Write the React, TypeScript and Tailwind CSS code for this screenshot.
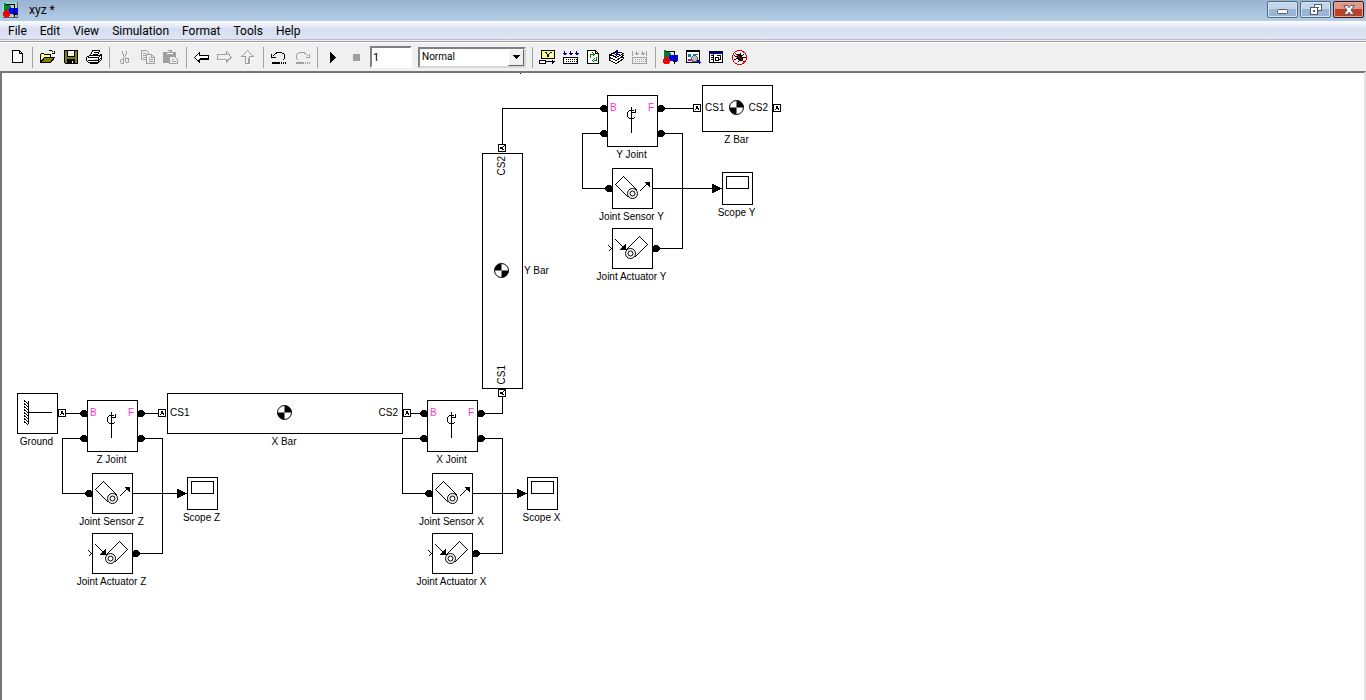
import type { ReactNode } from "react";

const menus = ["File", "Edit", "View", "Simulation", "Format", "Tools", "Help"];

/* ---------- toolbar ---------- */

function ToolButton({ label, disabled, children }: { label: string; disabled?: boolean; children: ReactNode }) {
  return (
    <button aria-label={label} disabled={disabled} className="flex h-[22px] w-[23px] shrink-0 items-center justify-center">
      <svg width="17" height="17" viewBox="0 0 17 17" shapeRendering="crispEdges" fill="none" stroke={disabled ? "#a0a0a0" : "#000"}>
        <g transform="translate(.5 .5)">{children}</g>
      </svg>
    </button>
  );
}

function Separator() {
  return (
    <div className="flex h-[21px] w-2 shrink-0 justify-center">
      <div className="h-full w-px bg-[#a0a0a0]" />
    </div>
  );
}

function ModelGlyph() {
  return (
    <>
      <path d="M2 1L8 4V10H2z" fill="#00802b" stroke="#00802b" />
      <path d="M7 6H15V11H7z" fill="#0000ff" stroke="#0000ff" />
      <path d="M3 2H12V14M10 12H14" stroke="#000" />
      <circle cx="4" cy="11" r="3" fill="#ff0000" stroke="#ff0000" />
      <path d="M4 9V11H6" stroke="#800000" />
    </>
  );
}

function Toolbar() {
  return (
    <div className="flex h-7 items-center overflow-hidden bg-[#f0f0f0] pl-[5px]">
      <ToolButton label="New model">
        <path d="M4 1H11L14 4V13H4zM11 1V4H14" fill="#fff" />
      </ToolButton>
      <Separator />
      <ToolButton label="Open model">
        <path d="M1 13V5L2 4H4L5 5H11V8" fill="#ffff80" />
        <path d="M1 13L5 8H15L11 13z" fill="#808000" />
        <path d="M9 2L10 1H12L14 3M15 1V4H12" />
      </ToolButton>
      <ToolButton label="Save">
        <path d="M2 1H15V14H3L2 13z" fill="#808000" />
        <path d="M5 1H12V7H5z" fill="#f0f0f0" />
        <path d="M5 10H12V14H5z" fill="#000" />
        <path d="M10 11V13" stroke="#fff" />
      </ToolButton>
      <ToolButton label="Print">
        <path d="M5 6L7 1H14L12 6z" fill="#fff" />
        <path d="M8 3H12M7 5H11" />
        <path d="M4 6H13L16 5V10L13 13H3L1 11V8z" fill="#fff" />
        <path d="M2 8H13L15 6M2 11H13L15 9M13 8V13M4 14H12" />
        <path d="M9 10H11" stroke="#d0d000" />
      </ToolButton>
      <Separator />
      <ToolButton label="Cut" disabled>
        <path d="M6 1V4L10 10M10 1V4L6 10" />
        <path d="M5 10H7V14H5L4 13V11zM10 9H12V13H10L9 12V10z" />
        <path d="M8 7V8M11 14H13" stroke="#fff" />
      </ToolButton>
      <ToolButton label="Copy" disabled>
        <path d="M2 1H7L9 3V10H2zM3 4H6M3 6H7M3 8H7" />
        <path d="M7 5H12L15 8V14H7z" fill="#f0f0f0" />
        <path d="M12 5V8H15M9 8H10M9 10H13M9 12H13" />
      </ToolButton>
      <ToolButton label="Paste" disabled>
        <path d="M1 3H13V13H1zM5 1H9V3" fill="#a0a0a0" />
        <path d="M4 4H10" stroke="#fff" />
        <path d="M7 7H12L15 10V14H7z" fill="#f0f0f0" />
        <path d="M9 10H11M9 12H13" />
      </ToolButton>
      <Separator />
      <ToolButton label="Go back">
        <path d="M1 8L6 3V6H15V10H6V13z" fill="#fff" />
        <path d="M6 9H15M5 12V10" />
      </ToolButton>
      <ToolButton label="Go forward" disabled>
        <path d="M2 11H9V14L15 9" stroke="#fff" />
        <path d="M15 8L10 2V5H1V10H10V13z" />
        <path d="M14 8L10 12" />
      </ToolButton>
      <ToolButton label="Go up to parent" disabled>
        <path d="M7 15H11V9H15" stroke="#fff" />
        <path d="M8 1L2 7H6V14H10V7H14z" />
        <path d="M9 8V13" />
      </ToolButton>
      <Separator />
      <ToolButton label="Undo">
        <path d="M1 4V8H5M2 7L5 4L7 3H11L14 5V9L12 11" />
        <path d="M1 13H9" strokeWidth="2" />
        <path d="M10 13H16" strokeWidth="2" strokeDasharray="1 1" />
      </ToolButton>
      <ToolButton label="Redo" disabled>
        <path d="M16 4V8H12M15 7L12 4L10 3H6L3 5V9L5 11" />
        <path d="M2 13H10" strokeWidth="2" />
        <path d="M11 13H17" strokeWidth="2" strokeDasharray="1 1" />
      </ToolButton>
      <Separator />
      <ToolButton label="Start simulation">
        <path d="M6 3L11 8L6 13z" fill="#000" />
      </ToolButton>
      <ToolButton label="Stop" disabled>
        <path d="M6 5H12V11H6z" fill="#a0a0a0" />
      </ToolButton>
      <input
        aria-label="Simulation stop time"
        defaultValue="1"
        className="ml-[3px] h-[22px] w-[42px] shrink-0 border-2 border-t-[#808080] border-r-white border-b-white border-l-[#808080] bg-white pl-px font-[Roboto,sans-serif] text-[11px] outline-none"
      />
      <div className="relative ml-1.5 h-[21px] w-[108px] shrink-0 border-2 border-t-[#808080] border-r-[#d8d8d8] border-b-[#d8d8d8] border-l-[#808080] bg-white">
        <select aria-label="Simulation mode" className="block h-full w-full appearance-none bg-white pl-0.5 font-[Roboto,sans-serif] text-[10px] outline-none">
          <option>Normal</option>
          <option>Accelerator</option>
          <option>External</option>
        </select>
        <span className="pointer-events-none absolute inset-y-0 right-0 flex w-4 items-center justify-center border border-t-white border-r-[#606060] border-b-[#606060] border-l-white bg-[#f0f0f0]">
          <svg width="7" height="4" viewBox="0 0 7 4" shapeRendering="crispEdges">
            <path d="M0 0H7L3.500 4z" />
          </svg>
        </span>
      </div>
      <div className="w-0.5 shrink-0" />
      <Separator />
      <ToolButton label="Library browser">
        <path d="M2 1H15V9H2z" fill="#ffff80" />
        <path d="M5 3H7M10 3H12M6 3L8 5H9L11 3M8 5V7M9 5V7" stroke="#000080" />
        <path d="M0 11H6V14H0z" fill="#fff" />
        <path d="M6 12H15M13 10V14M14 11V13" />
      </ToolButton>
      <ToolButton label="Incremental build">
        <path d="M2 1V5M8 1V5M14 1V5M0 4H4M6 4H10M12 4H16M1 5H3M7 5H9M13 5H15" stroke="#000080" />
        <path d="M1 8H15V14H1z" fill="#fff" />
        <path d="M3 10H14M3 12H14" strokeDasharray="1 1" />
      </ToolButton>
      <ToolButton label="Refresh model blocks">
        <path d="M2 1H10L13 4V14H2zM10 1V4H13" fill="#fff" />
        <path d="M5 8V5H8M7 3L9 5L7 7M11 7V11H8M9 9L7 11L9 13" stroke="#008000" />
      </ToolButton>
      <ToolButton label="Update diagram">
        <path d="M1 11L8 14L15 9V8L9 5L1 9z" fill="#fff" />
        <path d="M1 8L8 11L15 6L9 4L1 6z" fill="#fff" />
        <path d="M2 5L8 2L15 4L8 8z" fill="#fff" />
        <path d="M8 0V5M9 0V5M6 4L8 6L11 4M6 5H11" stroke="#000080" />
      </ToolButton>
      <ToolButton label="Build" disabled>
        <path d="M5 1V5M11 1V5M3 4H7M9 4H13M4 5H6M10 5H12M1 1V6M15 1V6" />
        <path d="M1 8H15V14H1z" />
        <path d="M3 10H14M3 12H14" strokeDasharray="1 1" />
      </ToolButton>
      <Separator />
      <ToolButton label="Simulink library">
        <ModelGlyph />
      </ToolButton>
      <ToolButton label="Model explorer">
        <path d="M1 1H14V13H1z" fill="#fff" />
        <path d="M1 2H14" />
        <path d="M3 5H5V7H3z" fill="#00a0a0" stroke="#008080" />
        <path d="M3 10H5V11H3z" stroke="#d000d0" />
        <path d="M7 5H12" stroke="#008080" />
        <circle cx="9" cy="9" r="3" fill="#c0c0c0" stroke="#606060" />
        <path d="M12 11L15 14" stroke="#0000c0" strokeWidth="2" />
      </ToolButton>
      <ToolButton label="Toggle model browser">
        <path d="M1 2H14V13H1z" fill="#fff" />
        <path d="M1 3H14" stroke="#000080" strokeWidth="2" />
        <path d="M5 4V13M2 6H4M2 8H4M2 10H4M8 6H12V10H10M7 8H10V11H7z" />
      </ToolButton>
      <ToolButton label="Debug">
        <path d="M6 5L10 6L11 10L9 11L6 9z" fill="#000" />
        <path d="M3 6L6 8M3 10L6 9M9 3V6M12 5L10 7M14 8H11M6 13L8 11" />
        <circle cx="8" cy="8" r="7" stroke="#e00000" />
        <path d="M3 3L13 13" stroke="#e00000" />
      </ToolButton>
    </div>
  );
}

/* ---------- diagram parts ---------- */

function Block({ place, size, label, children }: { place: string; size: string; label?: string; children?: ReactNode }) {
  return (
    <div className={`absolute flex flex-col items-center ${place} ${size}`}>
      <div className="h-full w-full shrink-0 border border-black bg-white">{children}</div>
      {label && <p className="mt-0.5 pr-0.5 leading-3 whitespace-nowrap">{label}</p>}
    </div>
  );
}

// centre of gravity symbol
function Mass({ turned }: { turned?: boolean }) {
  return (
    <svg width="15" height="15" viewBox="0 0 15 15" className={turned ? "shrink-0 rotate-90" : "shrink-0"}>
      <circle cx="7.500" cy="7.500" r="7" fill="#fff" stroke="#000" />
      <path d="M7.500 7.500V.5A7 7 0 0 1 14.500 7.500zM7.500 7.500V14.500A7 7 0 0 1 .5 7.500z" />
    </svg>
  );
}

// round connection port with a short stub on the block side
function Port({ x, y, side }: { x: number; y: number; side: "left" | "right" }) {
  return (
    <g transform={`translate(${x} ${y})`}>
      <path d="M-2 -3H1L3 -1V1L1 3H-2L-4 1V-1z" fill="#000" transform={side === "left" ? "translate(1 0)" : undefined} />
      {side === "left" ? <path d="M3 -3V3" /> : <path d="M-3 -3V3" />}
    </g>
  );
}

function FramePort({ x, y, turn = 0 }: { x: number; y: number; turn?: number }) {
  return (
    <g transform={`translate(${x} ${y})`}>
      <path d="M0 0H7V7H0z" fill="#fff" />
      <path d="M3 1V4L1 6M4 1V4L6 6M2 4H5" transform={`rotate(${turn} 3.500 3.500)`} />
    </g>
  );
}

// joint with its sensor, actuator and scope
function Axis({ name, place, scopePlace, scopeX }: { name: string; place: string; scopePlace: string; scopeX: number }) {
  return (
    <div className={`absolute ${place}`}>
      <svg width="1" height="1" className="absolute top-0 left-0 overflow-visible" shapeRendering="crispEdges" fill="none" stroke="#000">
        <g transform="translate(.5 .5)">
          <path d="M-4 38H-25V93H1" />
          <path d="M54 38H75V153H49" />
          <path d={`M45 93H${scopeX - 8}`} />
          <path d={`M${scopeX - 10} 89V97L${scopeX - 1} 93z`} fill="#000" />
          <path d="M1 150L4 153L1 156" />
          <Port x={-4} y={13} side="left" />
          <Port x={-4} y={38} side="left" />
          <Port x={54} y={13} side="right" />
          <Port x={54} y={38} side="right" />
          <Port x={1} y={93} side="left" />
          <Port x={49} y={153} side="right" />
        </g>
      </svg>
      <Block place="left-0 top-0" size="h-[52px] w-[51px]" label={`${name} Joint`}>
        <div className="relative flex justify-between pt-1.5 pr-[3px] pl-0.5 leading-3 text-[#ff33cc]">
          <span>B</span>
          <span>F</span>
          <svg width="11" height="27" viewBox="0 0 11 27" className="absolute top-[11px] left-[18px]" shapeRendering="crispEdges" fill="none" stroke="#000">
            <path d="M5.500 0V26M8.500 4.500L7.500 3.500H3.500L1.500 5.500V9.500L3.500 11.500H7.500L8.500 10.500" />
            <path d="M9.500 2V5.500H6M8.500 4.500H9.500" />
          </svg>
        </div>
      </Block>
      <Block place="left-[5px] top-[73px]" size="h-[41px] w-[41px]" label={`Joint Sensor ${name}`}>
        <svg width="39" height="39" viewBox="1 1 39 39" fill="none" stroke="#000">
          <g shapeRendering="crispEdges">
            <path d="M25.500 22.500L11.500 8.500L3.500 16.500L16.500 29.500M27.500 23.500L36.500 14.500" />
            <path d="M33 14H37V18z" fill="#000" />
          </g>
          <circle cx="20.500" cy="25.500" r="5" />
          <circle cx="20.500" cy="25.500" r="2.500" />
        </svg>
      </Block>
      <Block place="left-[5px] top-[133px]" size="h-[41px] w-[41px]" label={`Joint Actuator ${name}`}>
        <svg width="39" height="39" viewBox="1 1 39 39" fill="none" stroke="#000">
          <g shapeRendering="crispEdges">
            <path d="M13.500 22.500L27.500 8.500L35.500 16.500L22.500 29.500M3.500 11.500L12.500 20.500" />
            <path d="M13 17V21H9z" fill="#000" />
          </g>
          <circle cx="18.500" cy="25.500" r="5" />
          <circle cx="18.500" cy="25.500" r="2.500" />
        </svg>
      </Block>
      <Block place={scopePlace} size="h-[33px] w-[31px]" label={`Scope ${name}`}>
        <div className="m-[3px] h-[13px] border border-black" />
      </Block>
    </div>
  );
}

function Diagram() {
  return (
    <main className="relative min-h-[520px] flex-1 overflow-hidden border-t-2 border-r-2 border-l-2 border-t-[#777] border-r-[#e3e3e3] border-l-[#777] bg-white font-['Liberation_Sans',Arial,sans-serif] text-[10px] text-black">
      {/* links between the blocks */}
      <svg width="800" height="400" className="absolute top-0 left-0" shapeRendering="crispEdges" fill="none" stroke="#000">
        <g transform="translate(.5 .5)">
          <path d="M62 340H81M139 340H158M407 340H421M479 340H500V322M500 73V35H601M659 35H693M517 0H518" />
          <FramePort x={56} y={336} />
          <FramePort x={156} y={336} />
          <FramePort x={401} y={336} />
          <FramePort x={496} y={71} turn={-90} />
          <FramePort x={496} y={316} turn={-90} />
          <FramePort x={691} y={31} />
          <FramePort x={771} y={31} />
        </g>
      </svg>

      <Block place="left-[15px] top-[320px]" size="h-[41px] w-[41px]" label="Ground">
        <svg width="39" height="39" viewBox="1 1 39 39" shapeRendering="crispEdges" fill="none" stroke="#000">
          <path d="M11.500 8V31M11.500 19.500H35" />
          <path d="M7 7.500L11 10.500M7 10.500L11 13.500M7 13.500L11 16.500M7 16.500L11 19.500M7 19.500L11 22.500M7 22.500L11 25.500M7 25.500L11 28.500M7 28.500L11 31.500" />
        </svg>
      </Block>

      <Block place="left-[165px] top-[320px]" size="h-[41px] w-[236px]" label="X Bar">
        <div className="flex h-full items-center justify-between pr-1 pb-0.5 pl-0.5">
          <span>CS1</span>
          <Mass />
          <span>CS2</span>
        </div>
      </Block>

      <Block place="left-[480px] top-[80px]" size="h-[236px] w-[41px]">
        <div className="relative flex h-full flex-col items-center justify-between pt-0.5 pr-0.5 pb-1">
          <span className="rotate-180 leading-3 [writing-mode:vertical-rl]">CS2</span>
          <Mass turned />
          <span className="rotate-180 leading-3 [writing-mode:vertical-rl]">CS1</span>
          <p className="absolute left-[41px] top-[111px] leading-3 whitespace-nowrap">Y Bar</p>
        </div>
      </Block>

      <Block place="left-[700px] top-[12px]" size="h-[47px] w-[71px]" label="Z Bar">
        <div className="flex h-full items-center justify-between pr-1 pb-0.5 pl-0.5">
          <span>CS1</span>
          <Mass />
          <span>CS2</span>
        </div>
      </Block>

      <Axis name="Z" place="left-[85px] top-[327px]" scopePlace="left-[100px] top-[77px]" scopeX={100} />
      <Axis name="X" place="left-[425px] top-[327px]" scopePlace="left-[100px] top-[77px]" scopeX={100} />
      <Axis name="Y" place="left-[605px] top-[22px]" scopePlace="left-[115px] top-[77px]" scopeX={115} />
    </main>
  );
}

export default function App() {
  return (
    <div className="flex min-h-screen flex-col bg-[#f0f0f0] font-[Roboto,sans-serif] text-xs text-black">
      {/* title bar */}
      <header className="flex h-[21px] items-start justify-between bg-linear-to-b from-[#98b3d0] to-[#b4cde7] pr-0.5 pl-0.5">
        <div className="flex items-center gap-[11px]">
          <svg width="16" height="16" viewBox="0 0 16 16" shapeRendering="crispEdges" fill="none">
            <path d="M0 0H16V16H0z" fill="#c8c8c8" />
            <path d="M15.500 0V15.500H0" stroke="#606060" />
            <path d="M.5 16V.5H15" stroke="#60e0e0" />
            <g transform="translate(.5 .5)">
              <ModelGlyph />
            </g>
          </svg>
          <h1 className="leading-5">xyz *</h1>
        </div>
        <div className="flex gap-0.5 pt-px">
          <button aria-label="Minimize" className="flex h-[17px] w-[31px] items-center justify-center rounded-xs border border-[#53697f] bg-linear-to-b from-[#c3d6e9] from-50% to-[#98b5d3] to-50% pt-1 shadow-[inset_0_0_0_1px_#d5e4f2]">
            <svg width="11" height="5" viewBox="0 0 11 5">
              <rect x=".5" y=".5" width="10" height="4" rx="1" fill="#fff" stroke="#53596b" />
            </svg>
          </button>
          <button aria-label="Restore" className="flex h-[17px] w-[31px] items-center justify-center rounded-xs border border-[#53697f] bg-linear-to-b from-[#c3d6e9] from-50% to-[#98b5d3] to-50% shadow-[inset_0_0_0_1px_#d5e4f2]">
            <svg width="12" height="11" viewBox="0 0 12 11" shapeRendering="crispEdges" fill="#fff" stroke="#53596b">
              <path d="M4.500 .5H11.500V6.500H4.500zM7.500 3.500H8.500" />
              <path d="M.5 3.500H7.500V10.500H.5z" />
              <path d="M3.500 6.500H4.500V7.500H3.500z" fill="#53596b" />
            </svg>
          </button>
          <button aria-label="Close" className="flex h-[17px] w-[31px] items-center justify-center rounded-xs border border-[#43141a] bg-linear-to-b from-[#dc9a8c] from-50% to-[#bb4228] to-50% shadow-[inset_0_0_0_1px_#e5a797]">
            <svg width="12" height="10" viewBox="0 0 12 10" fill="#fff" stroke="#53596b">
              <path d="M.7.5H4.200L6 2.700L7.800.5H11.300L8 5L11.300 9.500H7.800L6 7.300L4.200 9.500H.7L4 5z" />
            </svg>
          </button>
        </div>
      </header>

      {/* menu bar */}
      <nav className="flex h-[18px] items-center bg-linear-to-b from-white via-[#d6ddf0] via-45% to-[#dfe5f5] pl-px">
        {menus.map((menu) => (
          <button key={menu} className="pt-0.5 pr-1.5 pl-[7px] leading-[18px]">
            {menu}
          </button>
        ))}
      </nav>
      <div className="border-t border-b border-t-[#b6bccc] border-b-[#a0a0a0] bg-[#f0f0f0] pt-px" />
      <div className="h-px bg-white" />

      <Toolbar />
      <Diagram />
    </div>
  );
}
